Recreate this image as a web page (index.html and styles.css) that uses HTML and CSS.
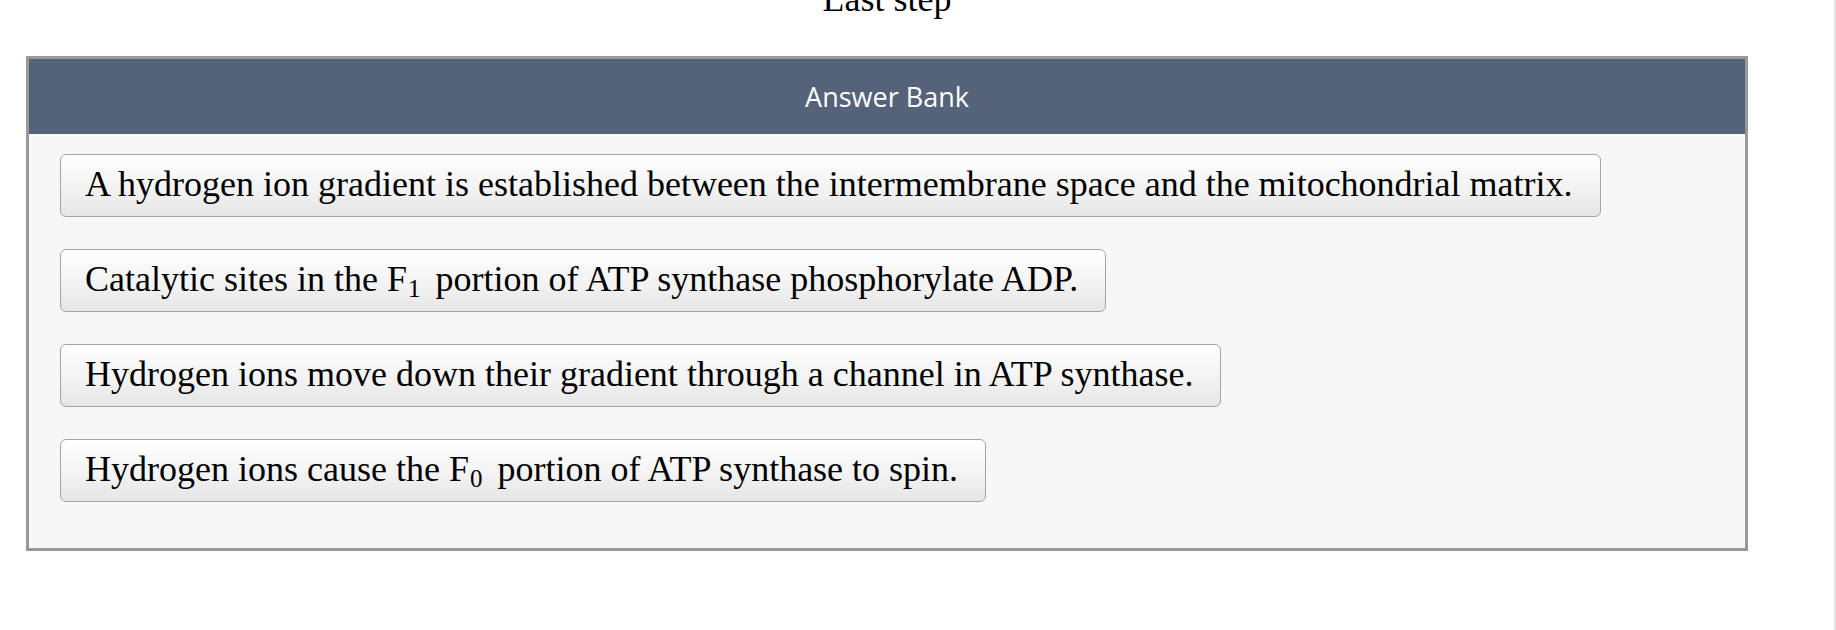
FILE: index.html
```html
<!DOCTYPE html>
<html lang="en">
<head>
<meta charset="utf-8">
<title>Last step</title>
<link rel="stylesheet" href="styles.css">
</head>
<body>
<div class="page">
  <h2 class="step-title">Last step</h2>
  <section class="bank">
    <header class="bank-header">Answer Bank</header>
    <div class="bank-items">
      <button class="chip" type="button">A hydrogen ion gradient is established between the intermembrane space and the mitochondrial matrix.</button>
      <button class="chip" type="button">Catalytic sites in the F<sub>1</sub> portion of ATP synthase phosphorylate ADP.</button>
      <button class="chip" type="button">Hydrogen ions move down their gradient through a channel in ATP synthase.</button>
      <button class="chip" type="button">Hydrogen ions cause the F<sub>0</sub> portion of ATP synthase to spin.</button>
    </div>
  </section>
</div>
</body>
</html>
```

FILE: styles.css
```css
html, body {
  margin: 0;
  padding: 0;
  background: #ffffff;
}

body {
  min-height: 100vh;
  box-sizing: border-box;
  border-right: 2px solid #e2e2e2;
  overflow: hidden;
}

.page {
  padding: 0 86px 0 26px;
}

.step-title {
  margin: -21px 0 37px;
  font-family: "Liberation Serif", "Times New Roman", serif;
  font-weight: normal;
  font-size: 36px;
  line-height: 40px;
  color: #000;
  text-align: center;
  height: 40px;
}

.bank {
  border: 3px solid #999999;
  background: #f7f7f7;
}

.bank-header {
  height: 75px;
  display: flex;
  align-items: center;
  justify-content: center;
  background: #546379;
  color: #ffffff;
  font-family: "Open Sans", "Noto Sans", sans-serif;
  font-size: 27px;
  font-weight: 500;
}

.bank-items {
  display: flex;
  flex-direction: column;
  align-items: flex-start;
  gap: 32px;
  padding: 20px 0 46px 31px;
}

.chip {
  margin: 0;
  padding: 9px 27px 11px 24px;
  border: 1px solid #a4a4a4;
  border-radius: 6px;
  background: linear-gradient(to bottom, #ffffff 0%, #f4f4f4 50%, #e6e6e6 100%);
  font-family: "Liberation Serif", "Times New Roman", serif;
  font-size: 36px;
  line-height: 41px;
  color: #000000;
  text-align: left;
  cursor: pointer;
}

.chip sub {
  font-size: 25px;
  line-height: 0;
  vertical-align: -6px;
  margin: 0 6px 0 1px;
}
```
